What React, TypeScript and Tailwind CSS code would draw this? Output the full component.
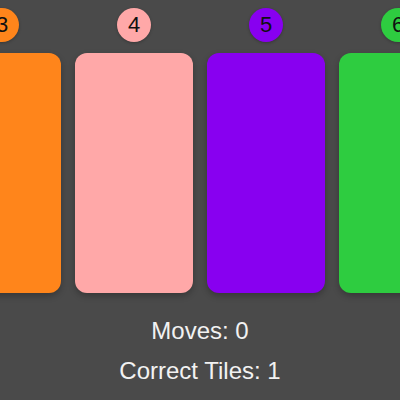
import React, { useState } from 'react';

type Tile = { id: number; color: string };

const tiles: Tile[] = [
  { id: 1, color: '#0074d9' },
  { id: 2, color: '#ffdc00' },
  { id: 3, color: '#ff851b' },
  { id: 4, color: '#ffa8a8' },
  { id: 5, color: '#8800f0' },
  { id: 6, color: '#2ecc40' },
  { id: 7, color: '#39cccc' },
  { id: 8, color: '#ff4136' },
];

const App: React.FC = () => {
  const [moves] = useState(0);
  const [correct] = useState(1);

  return (
    <div
      className="min-h-screen w-full overflow-hidden bg-[#4a4a4a] flex flex-col items-center"
      style={{ fontFamily: '"Liberation Sans", Arial, sans-serif' }}
    >
      {/* Tile row, centred and spilling past both edges */}
      <div className="w-full flex justify-center gap-[14px] pt-2">
        {tiles.map((tile) => (
          <div key={tile.id} className="flex-none w-[118px] flex flex-col items-center">
            <div
              className="w-[34px] h-[34px] rounded-full flex items-center justify-center text-[22px] leading-none text-[#111] shadow-[0_1px_3px_rgba(0,0,0,0.25)]"
              style={{ backgroundColor: tile.color }}
            >
              {tile.id}
            </div>
            <div
              className="mt-[11px] w-full h-[240px] rounded-xl shadow-[0_3px_6px_rgba(0,0,0,0.25)]"
              style={{ backgroundColor: tile.color }}
            />
          </div>
        ))}
      </div>

      <div className="mt-[18px] text-center text-[24px] leading-[40px] text-[#f2f2f2]">
        <p>Moves: {moves}</p>
        <p>Correct Tiles: {correct}</p>
      </div>
    </div>
  );
};

export default App;
